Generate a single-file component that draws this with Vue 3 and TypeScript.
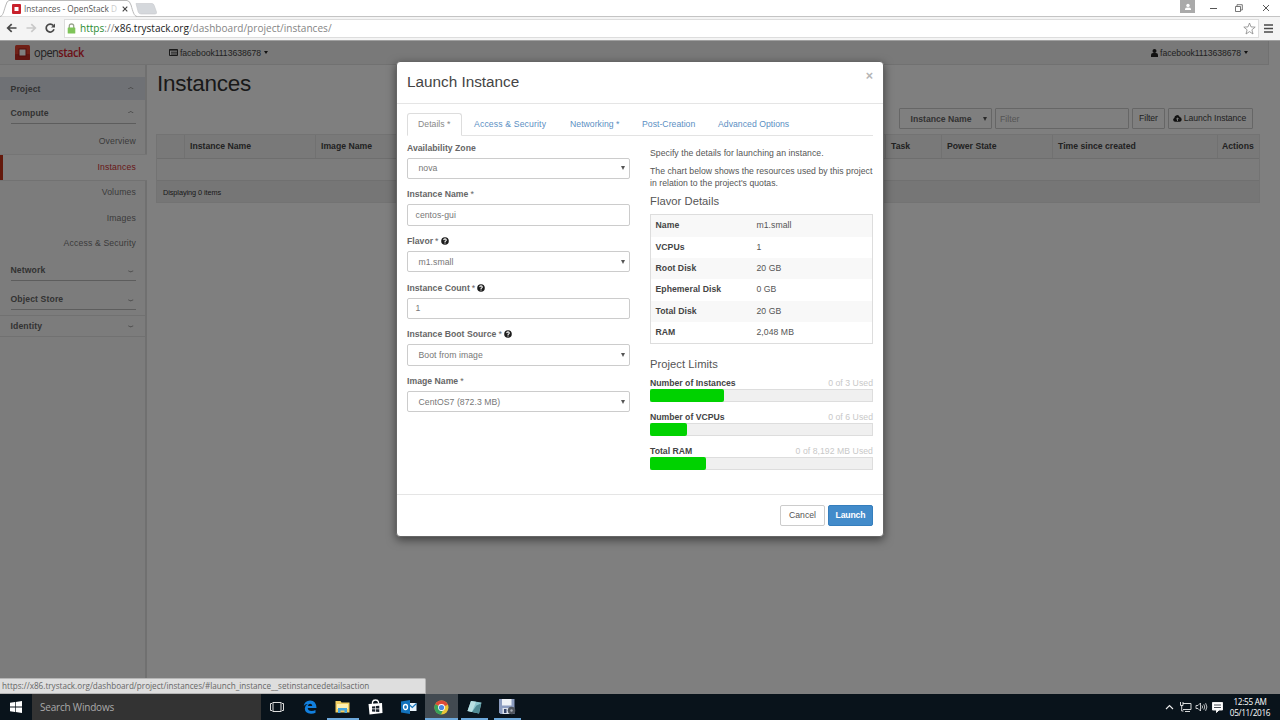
<script setup lang="ts">
interface Field { label: string; value: string; required?: boolean; help?: boolean; select?: boolean }
interface Quota { label: string; used: string; percent: number }

const computeItems = ['Overview', 'Instances', 'Volumes', 'Images', 'Access & Security']
const tabs = [
  { label: 'Details *', key: 'tab-details' },
  { label: 'Access & Security', key: 'tab-access' },
  { label: 'Networking *', key: 'tab-network' },
  { label: 'Post-Creation', key: 'tab-post' },
  { label: 'Advanced Options', key: 'tab-advanced' },
]
const fields: Field[] = [
  { label: 'Availability Zone', value: 'nova', select: true },
  { label: 'Instance Name', value: 'centos-gui', required: true },
  { label: 'Flavor', value: 'm1.small', required: true, help: true, select: true },
  { label: 'Instance Count', value: '1', required: true, help: true },
  { label: 'Instance Boot Source', value: 'Boot from image', required: true, help: true, select: true },
  { label: 'Image Name', value: 'CentOS7 (872.3 MB)', required: true, select: true },
]
const flavor = [
  ['Name', 'm1.small'],
  ['VCPUs', '1'],
  ['Root Disk', '20 GB'],
  ['Ephemeral Disk', '0 GB'],
  ['Total Disk', '20 GB'],
  ['RAM', '2,048 MB'],
]
const quotas: Quota[] = [
  { label: 'Number of Instances', used: '0 of 3 Used', percent: 33.3 },
  { label: 'Number of VCPUs', used: '0 of 6 Used', percent: 16.7 },
  { label: 'Total RAM', used: '0 of 8,192 MB Used', percent: 25 },
]
</script>

<template>
  <div class="desktop">
    <div class="tabstrip">
      <svg class="tabshape" width="160" height="18" viewBox="0 0 160 18">
        <path d="M0 16.5 C3 16 3.5 12 5.5 6 Q7 .5 9 .5 H127 Q129.500 .5 131 5 C133 12 134 16 137 16.500" fill="#fff" stroke="#b9b9b9" />
        <path d="M136 3.500 H152 Q153.500 3.500 154.200 5.500 L156.500 12 Q157 14 155 14 H141 Q139 14 138.200 12 Z" fill="#d5d8dc" stroke="#c6c8cb" stroke-width=".6" />
      </svg>
      <div class="tab-content">
        <svg width="9" height="10" viewBox="0 0 9 10"><rect width="9" height="10" rx="1" fill="#c8202b" /><rect x="2.500" y="3" width="4" height="4" fill="#fff" /></svg>
        <span class="tab-title">Instances - OpenStack <i>D</i></span>
        <svg class="tab-x" width="6" height="6" viewBox="0 0 6 6"><path d="M.7 .7 5.300 5.300 M5.300 .7 .7 5.300" stroke="#444" stroke-width="1.100" /></svg>
      </div>
      <div class="window-buttons">
        <div class="user"><svg width="8" height="8" viewBox="0 0 8 8"><circle cx="4" cy="2.400" r="1.700" fill="#fff" /><path d="M1 7V6Q1 4.600 4 4.600T7 6V7Z" fill="#fff" /></svg></div>
        <svg class="min" width="7" height="8" viewBox="0 0 7 8"><path d="M0 4.500H7" stroke="#555" /></svg>
        <svg class="max" width="8" height="8" viewBox="0 0 8 8"><path d="M.5 2.500H5.500V7.500H.5Z M2 2.500V.7H7.300V6H5.500" fill="none" stroke="#555" stroke-width=".8" /></svg>
        <svg class="cls" width="8" height="8" viewBox="0 0 8 8"><path d="M1 1 7 7M7 1 1 7" stroke="#444" stroke-width=".9" /></svg>
      </div>
    </div>
    <div class="toolbar">
      <svg class="nav-icons" width="64" height="23" viewBox="0 0 64 23" fill="none">
        <path d="M16.500 11H8M11.700 7.100 7.700 11 11.700 14.900" stroke="#484848" stroke-width="1.700" />
        <path d="M26.500 11H35M31.300 7.100 35.300 11 31.300 14.900" stroke="#c9c9c9" stroke-width="1.700" />
        <path d="M53.300 8.500A4 4 0 1 0 54 12.300" stroke="#484848" stroke-width="1.700" /><path d="M55 6.500V10.500H51Z" fill="#484848" />
      </svg>
      <div class="address">
        <svg width="9" height="11" viewBox="0 0 9 11"><path d="M2.300 5V3Q2.300 1 4.500 1T6.700 3V5" fill="none" stroke="#9aa58f" stroke-width="1.300" /><rect x=".7" y="4.500" width="7.600" height="6" rx=".6" fill="#7fc45a" /></svg>
        <span class="url"><b>https</b>://<em>x86.trystack.org</em>/dashboard/project/instances/</span>
        <svg class="star" width="13" height="13" viewBox="0 0 13 13"><path d="M6.500 1 8 4.900 12.200 5.100 8.900 7.800 10 12 6.500 9.600 3 12 4.100 7.800 .8 5.100 5 4.900Z" fill="none" stroke="#888" stroke-width=".8" /></svg>
      </div>
      <svg class="burger" width="9" height="9" viewBox="0 0 9 9"><path d="M0 1H9M0 4.500H9M0 8H9" stroke="#484848" stroke-width="1.500" /></svg>
    </div>

    <div class="page">
      <header class="topbar">
        <div class="brand">
          <svg width="15" height="15" viewBox="0 0 15 15"><rect width="15" height="15" rx="1.500" fill="#e0402f" /><rect y="9" width="15" height="6" rx="1" fill="#c02a22" /><rect x="3.500" y="3.500" width="8" height="8" fill="#a01c19" /><rect x="4.500" y="4.500" width="6" height="6" fill="#fff" /></svg>
          <span class="wordmark">open<b>stack</b></span>
        </div>
        <div class="project-switch">
          <svg width="9" height="7" viewBox="0 0 9 7"><path d="M.5 .5H8.500V6.500H.5Z" fill="#fff" stroke="#333" /><path d="M0 1.200H9M2 3.200H8M2 5H8" stroke="#333" stroke-width=".9" /></svg>
          <span>facebook1113638678</span><i class="caret"></i>
        </div>
        <div class="account">
          <svg width="7" height="8" viewBox="0 0 7 8"><circle cx="3.500" cy="2.100" r="2" fill="#222" /><path d="M0 8V6Q0 4 2 4H5Q7 4 7 6V8Z" fill="#222" /></svg>
          <span>facebook1113638678</span><i class="caret"></i>
        </div>
      </header>
      <div class="body">
        <nav class="sidebar">
          <div class="side-project"><span>Project</span><i class="chev up"></i></div>
          <div class="group compute"><span>Compute</span><i class="chev up"></i></div>
          <div class="side-items">
            <div v-for="item in computeItems" :key="item" class="side-item" :class="{ active: item === 'Instances' }">{{ item }}</div>
          </div>
          <div class="group network"><span>Network</span><i class="chev"></i></div>
          <div class="group store"><span>Object Store</span><i class="chev"></i></div>
          <div class="identity"><span>Identity</span><i class="chev"></i></div>
        </nav>
        <main class="main">
          <h1>Instances</h1>
          <div class="actions">
            <div class="filter-select"><span>Instance Name</span><i class="arrow"></i></div>
            <div class="filter-input">Filter</div>
            <div class="btn filter-btn">Filter</div>
            <div class="btn launch-btn">
              <svg width="9" height="7" viewBox="0 0 9 7"><path d="M2 6.700A2 2 0 0 1 1.300 2.900 2.800 2.800 0 0 1 6.700 1.900 2.500 2.500 0 0 1 7 6.700Z" fill="#222" /><path d="M4.500 6V3M3.200 4.200 4.500 2.900 5.800 4.200" fill="none" stroke="#fff" stroke-width=".9" /></svg>
              <span>Launch Instance</span>
            </div>
          </div>
          <div class="table">
            <div class="thead">
              <div class="c0"></div><div class="c1">Instance Name</div><div class="c2">Image Name</div><div class="c3">Task</div><div class="c4">Power State</div><div class="c5">Time since created</div><div class="c6">Actions</div>
            </div>
            <div class="empty-row"></div>
            <div class="tfoot">Displaying 0 items</div>
          </div>
        </main>
      </div>

      <div class="backdrop">
        <section class="modal">
          <div class="modal-header"><h3>Launch Instance</h3><span class="close">×</span></div>
          <div class="modal-body">
            <div class="tabs">
              <div v-for="(t, i) in tabs" :key="t.key" class="tab" :class="[t.key, { active: i === 0 }]">{{ t.label }}</div>
            </div>
            <div class="columns">
              <div class="form">
                <div v-for="f in fields" :key="f.label" class="field">
                  <div class="label">
                    <span>{{ f.label }}</span>
                    <span v-if="f.required" class="req">*</span>
                    <svg v-if="f.help" width="8" height="8" viewBox="0 0 8 8"><circle cx="4" cy="4" r="3.800" fill="#1d1d1d" /><path d="M2.700 3.100Q2.800 1.900 4 1.900T5.300 3Q5.300 3.600 4.600 4Q4 4.300 4 4.900M4 5.400V6.400" fill="none" stroke="#fff" stroke-width="1.100" /></svg>
                  </div>
                  <div class="control" :class="{ select: f.select }"><span>{{ f.value }}</span><i v-if="f.select" class="arrow"></i></div>
                </div>
              </div>
              <div class="info">
                <p class="p1">Specify the details for launching an instance.</p>
                <p class="p2"><span>The chart below shows the resources used by this project</span><br><span>in relation to the project's quotas.</span></p>
                <h4>Flavor Details</h4>
                <div class="flavor">
                  <div v-for="row in flavor" :key="row[0]" class="flavor-row"><b>{{ row[0] }}</b><span>{{ row[1] }}</span></div>
                </div>
                <h4 class="limits">Project Limits</h4>
                <div v-for="q in quotas" :key="q.label" class="quota">
                  <div class="quota-text"><b>{{ q.label }}</b><span>{{ q.used }}</span></div>
                  <div class="bar"><div class="fill" :style="{ width: q.percent + '%' }"></div></div>
                </div>
              </div>
            </div>
          </div>
          <div class="modal-footer"><div class="mbtn cancel">Cancel</div><div class="mbtn primary">Launch</div></div>
        </section>
      </div>
      <div class="status">https://x86.trystack.org/dashboard/project/instances/#launch_instance__setinstancedetailsaction</div>
    </div>

    <footer class="taskbar">
      <div class="start"><svg width="12" height="12" viewBox="0 0 12 12"><path d="M0 1.800 5 1.100V5.600H0ZM5.700 1 12 0V5.600H5.700ZM0 6.400H5V10.900L0 10.200ZM5.700 6.400H12V12L5.700 11Z" fill="#fff" /></svg></div>
      <div class="search">Search Windows</div>
      <div class="task"><svg width="16" height="14" viewBox="0 0 16 14" fill="none" stroke="#ddd"><rect x="4" y="2.500" width="8" height="9" /><path d="M3 3.500H1.500V10.500H3M13 3.500H14.500V10.500H13" /></svg></div>
      <div class="task"><svg width="14" height="14" viewBox="0 0 14 14"><path d="M.7 6Q1.500 .5 7.200 .4 13.300 .7 13.500 8H4.700Q5 11 8.500 11 10.800 11 12.500 10V12.800Q10.500 13.800 7.800 13.700 2 13.400 1.800 8.500 2 5.500 4.700 4.100 2.200 4 .7 6ZM4.900 5.900H9.300Q9 3.700 7.200 3.700 5.300 3.700 4.900 5.900Z" fill="#1280df" /></svg></div>
      <div class="task open"><svg width="15" height="14" viewBox="0 0 15 14"><path d="M.5 1H5.500L6.500 2.500H14.500V12.500H.5Z" fill="#f2cf63" /><path d="M2 4H13V9H2Z" fill="#fff0b0" /><path d="M3 13V8H12V13H9.500V10.500H5.500V13Z" fill="#45a6df" /></svg></div>
      <div class="task"><svg width="15" height="16" viewBox="0 0 15 16"><path d="M.5 5 14 4 14.500 14 1.500 15.500Z" fill="#fff" /><path d="M4.500 5V3Q5 1 7.500 1T10.500 3V4.500" stroke="#fff" fill="none" stroke-width="1.300" /><path d="M4 7.500 7.200 7.200V9.500H4ZM7.900 7.100 11.300 6.800V9.500H7.900ZM4 10.200H7.200V12.800L4 12.500ZM7.900 10.200H11.300V13.100L7.900 12.800Z" fill="#18202a" /></svg></div>
      <div class="task"><svg width="16" height="14" viewBox="0 0 16 14"><rect x="7" y="3" width="8.500" height="8" fill="#e8f3fb" /><path d="M7 3.500 11.300 7.500 15.500 3.500" fill="none" stroke="#1676bd" stroke-width="1.200" /><path d="M0 1.500 9 0V14L0 12.500Z" fill="#1272bc" /><ellipse cx="4.500" cy="7" rx="2" ry="2.500" fill="none" stroke="#fff" stroke-width="1.300" /></svg></div>
      <div class="task open current"><svg width="15" height="15" viewBox="0 0 15 15"><circle cx="7.500" cy="7.500" r="7" fill="#e8c536" /><path d="M7.500 7.500 1.200 4.300A7 7 0 0 1 13.900 4.700Z" fill="#dc4a38" /><path d="M1.300 4.200A7 7 0 0 0 7 14.500L9.500 9 7.500 7.500Z" fill="#37a35a" /><circle cx="7.500" cy="7.500" r="3.400" fill="#fff" /><circle cx="7.500" cy="7.500" r="2.600" fill="#4a86e0" /></svg></div>
      <div class="task open narrow"><svg width="15" height="14" viewBox="0 0 15 14"><path d="M4 1 14.500 2.500 12 13.500 .5 11Z" fill="#8cc7cf" /><path d="M4 1 9 1.700 5 11.900 .5 11Z" fill="#b8e0e2" /><path d="M9.500 5.500 14 3.500 12 13.500 5 12Z" fill="#4f8a93" /></svg></div>
      <div class="task open narrow"><svg width="17" height="16" viewBox="0 0 17 16"><path d="M0 0H15.500V15H1.500L0 13.500Z" fill="#8b9cc0" /><rect x="3" y="0" width="9.500" height="6.500" fill="#eef2f7" /><rect x="3.500" y="9" width="8.500" height="6" fill="#dbe1ea" /><rect x="5" y="10" width="2.500" height="4" fill="#35446a" /><circle cx="12.500" cy="11.500" r="3.800" fill="#50565f" /><circle cx="12.500" cy="11.500" r="1.200" fill="#aab0b8" /></svg></div>
      <div class="tray">
        <svg width="60" height="14" viewBox="0 0 60 14" fill="none" stroke="#eee"><path d="M1 9 4.500 5.500 8 9" stroke-width="1.100" /><path d="M18 3.500H26V9.500H18M20 11.500H25M15.500 2V5.500H18V2M16.700 5.500V11H18.500" stroke-width=".9" /><path d="M31 5.500H33L35.500 3V11L33 8.500H31Z" stroke-width=".8" /><path d="M37 5.500Q38.200 7 37 8.500M38.800 4.300Q40.700 7 38.800 9.700M40.600 3.200Q43.200 7 40.600 10.800" stroke-width=".8" /><path d="M47.500 2.500H57.500V10H54L51.500 12.500V10H47.500Z" fill="#fff" /><path d="M49 5H56M49 7.500H56" stroke="#18202a" stroke-width=".8" /></svg>
        <div class="clock"><div>12:55 AM</div><div class="date">05/11/2016</div></div>
      </div>
    </footer>
  </div>
</template>

<style>
body { overflow: hidden; background: #fff; }
</style>
<style scoped>
* { box-sizing: border-box; }
svg { display: block; flex: none; }
.desktop { width: 1280px; height: 720px; display: flex; flex-direction: column; overflow: hidden; font-family: "Liberation Sans", Arial, sans-serif; font-size: 8.67px; line-height: 12px; letter-spacing: .05px; color: #444; white-space: nowrap; }
.tabstrip { height: 17px; flex: none; position: relative; display: flex; justify-content: space-between; background: #fff; border-bottom: 1px solid #c4c4c4; font-family: "Open Sans", sans-serif; }
.tabshape { position: absolute; left: 0; top: 0; }
.tab-content { position: relative; display: flex; align-items: center; padding-left: 12px; height: 17px; }
.tab-title { margin-left: 3px; width: 95px; font-size: 8.250px; letter-spacing: 0; color: #555; }
.tab-title i { font-style: normal; color: #ccc; }
.tab-x { margin-left: 3px; }
.window-buttons { display: flex; padding-right: 10px; }
.user { width: 15px; height: 13px; background: #aaa; display: flex; align-items: center; justify-content: center; }
.min { margin: 4px 0 0 15px; } .max { margin: 4px 0 0 18px; } .cls { margin: 4px 0 0 19px; }
.toolbar { height: 24px; flex: none; display: flex; align-items: center; background: #f4f4f4; border-bottom: 1px solid #a0a0a0; }
.address { flex: none; width: 1195px; height: 19px; display: flex; align-items: center; background: #fff; border: 1px solid #ddd; padding: 0 2px 1px 2px; }
.url { font-family: "Open Sans", sans-serif; font-size: 10.050px; letter-spacing: .01px; color: #858585; margin-left: 4px; }
.url b { font-weight: 400; color: #2c8c31; } .url em { font-style: normal; color: #222; }
.star { margin-left: auto; }
.burger { margin-left: 5px; }
.page { position: relative; height: 653px; flex: none; display: flex; flex-direction: column; background: #fff; }
.topbar { width: 1269px; height: 24px; flex: none; display: flex; align-items: center; background: #f2f2f2; border-bottom: 1px solid #e2e2e2; border-right: 1px solid #e2e2e2; letter-spacing: -.06px; }
.brand { display: flex; align-items: center; width: 155px; padding: 0 0 1px 14.500px; gap: 4px; }
.wordmark { font-family: "Open Sans", sans-serif; font-size: 13px; letter-spacing: -.6px; color: #444; transform: scaleX(.85); transform-origin: left; } .wordmark b { color: #d8232e; font-weight: 600; }
.project-switch, .account { display: flex; align-items: center; gap: 2px; }
.project-switch { margin-left: 14px; } .account { margin-left: auto; padding-right: 20px; }
.caret { margin-left: 1px; border: 2.500px solid transparent; border-top: 3px solid #222; border-bottom: 0; }
.body { flex: 1; display: flex; }
.sidebar { width: 147px; padding-top: 12px; background: #f9f9f9; border-right: 2px solid #e0e0e0; flex: none; font-weight: 700; color: #666; letter-spacing: .11px; }
.side-project { height: 23px; display: flex; align-items: center; justify-content: space-between; padding: 0 13px 0 10.500px; background: #dfe3ea; }
.group { display: flex; align-items: center; justify-content: space-between; margin: 0 9px 0 10.500px; padding-right: 4px; height: 20px; border-bottom: 1px solid #bbb; }
.compute { margin-top: 4px; padding-bottom: 1px; }
.chev { width: 3.500px; height: 3.500px; border: solid #888; border-width: 0 1px 1px 0; transform: scaleY(.5) rotate(45deg); }
.chev.up { transform: scaleY(.5) rotate(225deg); }
.side-items { padding-top: 5px; font-weight: 400; color: #777; letter-spacing: .16px; }
.side-item { height: 25.600px; line-height: 25.600px; padding-right: 9px; text-align: right; border-left: 3px solid transparent; }
.side-item.active { margin-right: -2px; padding-right: 11px; background: #fff; color: #d02f2f; border-left-color: #c83218; box-shadow: 0 -1px #eaeaea, 0 1px #e4e4e4; }
.network { margin-top: 4px; } .store { margin-top: 9px; }
.identity { height: 22px; margin-top: 5px; padding: 0 13px 0 10.500px; display: flex; align-items: center; justify-content: space-between; border: solid #e3e3e3; border-width: 1px 0; }
.main { flex: 1; padding: 5px 20px 0 9px; }
h1 { margin: 0; font-size: 22.500px; line-height: 27px; font-weight: 400; letter-spacing: -.25px; color: #333; padding-left: 1px; }
.actions { display: flex; justify-content: flex-end; gap: 3px; margin-top: 11px; padding-right: 7px; height: 21px; }
.filter-select, .filter-input, .btn { border: 1px solid #ccc; display: flex; align-items: center; border-radius: 1px; }
.filter-select { width: 93px; justify-content: space-between; padding: 0 4px 0 10.500px; font-weight: 700; color: #666; letter-spacing: 0; }
.filter-input { width: 134px; padding-left: 4px; color: #aaa; }
.btn { justify-content: center; gap: 2px; letter-spacing: -.08px; padding-bottom: 1px; }
.filter-btn { width: 33px; } .launch-btn { width: 85px; padding-right: 2px; }
.arrow { border: 2px solid transparent; border-top: 4px solid #555; border-bottom: 0; }
.table { margin-top: 5px; border: 1px solid #e6e6e6; }
.thead { height: 24px; background: #f2f2f2; display: flex; font-weight: 700; border-bottom: 1px solid #dcdcdc; color: #444; letter-spacing: 0; }
.thead > div { line-height: 23px; padding-left: 5px; border-left: 1px solid #e3e3e3; }
.thead .c0 { width: 27px; border: 0; } .c1 { width: 131px; } .c2 { width: 570px; } .c3 { width: 56px; } .c4 { width: 111px; } .c5 { width: 165px; } .thead .c6 { flex: 1; padding-left: 4px; }
.empty-row { height: 22px; background: #f9f9f9; border-bottom: 1px solid #e0e0e0; }
.tfoot { height: 21px; line-height: 23px; background: #ececec; padding-left: 6px; font-size: 7.300px; letter-spacing: -.06px; color: #333; }
.backdrop { position: absolute; inset: 0; background: rgba(0, 0, 0, .5); display: flex; justify-content: center; align-items: flex-start; padding-top: 20px; }
.modal { width: 488px; height: 476px; background: #fff; border-radius: 4px; border: 1px solid #666; box-shadow: 0 3px 10px rgba(0, 0, 0, .5); display: flex; flex-direction: column; color: #555; }
.modal-header { height: 42px; flex: none; display: flex; justify-content: space-between; border-bottom: 1px solid #e5e5e5; padding: 0 10px; }
h3 { margin: 0; font-size: 15.300px; line-height: 40px; font-weight: 400; letter-spacing: 0; color: #444; }
.close { font-size: 12.500px; line-height: 28px; font-weight: 700; color: #b5b5b5; }
.modal-body { flex: 1; padding: 9px 10px 0; }
.tabs { display: flex; height: 23px; border-bottom: 1px solid #e3e3e3; color: #5b8fc3; }
.tab { height: 23px; line-height: 23px; padding-left: 12px; letter-spacing: .03px; }
.tab-access { width: 96px; letter-spacing: .14px; } .tab-network { width: 72px; } .tab-post { width: 76px; }
.tab.active { line-height: 21px; padding: 0 10px; width: 55px; border: 1px solid #ddd; border-bottom-color: #fff; border-radius: 3px 3px 0 0; color: #888; }
.columns { display: flex; gap: 20px; }
.form { width: 223px; padding-top: 5.600px; flex: none; }
.field { height: 46.700px; }
.label { height: 12px; margin-bottom: 4px; display: flex; align-items: center; gap: 3px; font-weight: 700; color: #666; letter-spacing: .02px; }
.req { font-weight: 400; margin-left: -1px; }
.req + svg { margin-left: -1px; }
.control { height: 21.300px; border: 1px solid #ccc; border-radius: 2px; display: flex; align-items: center; justify-content: space-between; padding: 0 4px 0 7.500px; color: #777; }
.control.select { padding-left: 10.500px; }
.info { width: 223px; padding-top: 11.400px; }
p { margin: 0; }
.p2 { margin-top: 6px; letter-spacing: .035px; }
h4 { margin: 4px 0 5px; font-size: 11.200px; line-height: 16px; font-weight: 400; color: #555; letter-spacing: .05px; }
.flavor { height: 130px; border: 1px solid #ddd; }
.flavor-row { height: 21.350px; line-height: 21px; display: flex; padding-left: 4.500px; }
.flavor-row b { width: 101px; color: #444; } .flavor-row:nth-child(odd) { background: #f8f8f8; }
.limits { margin: 12px 0 4.300px; }
.quota { height: 34px; }
.quota-text { display: flex; justify-content: space-between; line-height: 12px; letter-spacing: 0; } .quota-text b { color: #444; } .quota-text span { color: #c8c8c8; letter-spacing: .05px; }
.bar { height: 13.500px; background: #f0f0f0; border: 1px solid #ddd; border-left: 0; }
.fill { height: 13.500px; margin-top: -1px; border-radius: 2px; background: #00d200; }
.modal-footer { height: 42px; flex: none; border-top: 1px solid #e5e5e5; display: flex; justify-content: flex-end; align-items: center; gap: 3px; padding-right: 10px; }
.mbtn { width: 45px; height: 21px; line-height: 19px; text-align: center; border: 1px solid #ccc; border-radius: 2px; letter-spacing: 0; }
.primary { background: #428bca; border-color: #357ebd; color: #fff; font-weight: 700; letter-spacing: -.15px; }
.status { position: absolute; left: 0; bottom: 0; width: 426px; height: 16px; line-height: 14px; padding-left: 2px; background: #dedede; border: 1px solid #b5b5b5; border-left: 0; border-radius: 0 2px 0 0; font-family: "Open Sans", sans-serif; font-size: 8.150px; letter-spacing: 0; color: #666; }
.taskbar { height: 26px; flex: none; display: flex; background: #09131b; font-family: "Open Sans", sans-serif; color: #fff; }
.start { width: 32px; display: flex; align-items: center; justify-content: center; }
.search { width: 229px; background: #333; padding-left: 8px; line-height: 26px; font-size: 10px; letter-spacing: -.2px; color: #aaa; }
.task { width: 32.800px; display: flex; align-items: center; justify-content: center; border-bottom: 2px solid transparent; padding-top: 2px; }
.task.open { border-bottom-color: #6da9dc; }
.task.narrow { width: 27px; margin: 0 3px; }
.task.current { background: #424a51; }
.tray { margin-left: auto; display: flex; align-items: center; padding-right: 7px; }
.clock { width: 46px; text-align: center; font-size: 8.200px; line-height: 11px; letter-spacing: -.3px; margin-left: 2px; }
</style>
